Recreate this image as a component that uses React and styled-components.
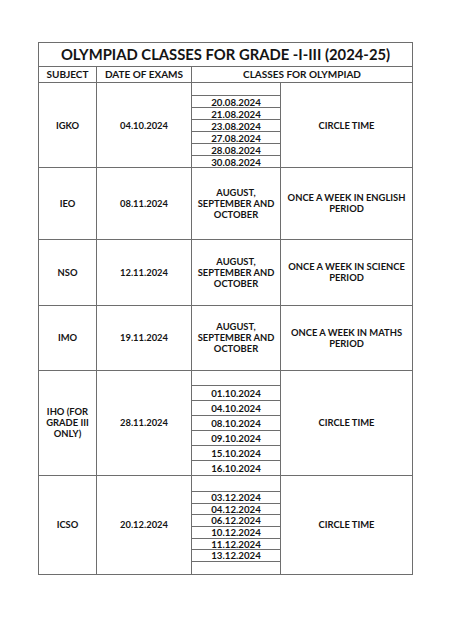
import React from 'react'
import styled, { createGlobalStyle } from 'styled-components'

const GlobalStyle = createGlobalStyle`
  html, body {
    margin: 0;
    padding: 0;
    background: #fff;
  }
  body {
    font-family: Lato, "Open Sans", sans-serif;
    color: #141414;
  }
`

const Page = styled.div`
  width: 474px;
  height: 632px;
  box-sizing: border-box;
  padding: 42px 0 0 38px;
`

const Table = styled.table`
  border-collapse: collapse;
  table-layout: fixed;
  width: 374px;
  font-weight: 700;
  font-size: 9.4px;
  line-height: 11px;
`

const Row = styled.tr`
  height: ${p => p.$h}px;
`

const Cell = styled.td`
  border: 1px solid #6e6e6e;
  padding: 0 2px;
  text-align: center;
  vertical-align: middle;
`

const TitleCell = styled(Cell)`
  font-size: 14.8px;
  line-height: 20px;
  padding: 0;
`

const HeadCell = styled(Cell)`
  font-size: 10px;
  padding: 0;
`

const DatesCell = styled(Cell)`
  padding: 0;
  vertical-align: top;
  font-size: 9.7px;
`

const DateStack = styled.div`
  display: flex;
  flex-direction: column;
  padding-top: ${p => p.$gap}px;
`

const DateBox = styled.div`
  height: ${p => p.$h}px;
  line-height: ${p => p.$h}px;
  border-top: 1px solid #6e6e6e;
  box-sizing: border-box;
`

const rows = [
  {
    subject: 'IGKO', exam: '04.10.2024', h: 83.5, plan: 'CIRCLE TIME',
    dates: { gap: 12, box: 12, tail: 0, list: ['20.08.2024', '21.08.2024', '23.08.2024', '27.08.2024', '28.08.2024', '30.08.2024'] },
  },
  { subject: 'IEO', exam: '08.11.2024', h: 71.5, months: true, plan: 'ONCE A WEEK IN ENGLISH PERIOD' },
  { subject: 'NSO', exam: '12.11.2024', h: 66.5, months: true, plan: 'ONCE A WEEK IN SCIENCE PERIOD' },
  { subject: 'IMO', exam: '19.11.2024', h: 64.5, months: true, plan: 'ONCE A WEEK IN MATHS PERIOD' },
  {
    subject: 'IHO (FOR GRADE III ONLY)', exam: '28.11.2024', h: 103.5, plan: 'CIRCLE TIME',
    dates: { gap: 14, box: 15, tail: 0, list: ['01.10.2024', '04.10.2024', '08.10.2024', '09.10.2024', '15.10.2024', '16.10.2024'] },
  },
  {
    subject: 'ICSO', exam: '20.12.2024', h: 98.5, plan: 'CIRCLE TIME',
    dates: { gap: 15.5, box: 11.7, tail: 12.5, list: ['03.12.2024', '04.12.2024', '06.12.2024', '10.12.2024', '11.12.2024', '13.12.2024'] },
  },
]

const Months = () => (
  <>
    AUGUST,<br />SEPTEMBER AND<br />OCTOBER
  </>
)

export default function App() {
  return (
    <Page>
      <GlobalStyle />
      <Table>
        <colgroup>
          <col style={{ width: 58 }} />
          <col style={{ width: 95 }} />
          <col style={{ width: 89 }} />
          <col style={{ width: 132 }} />
        </colgroup>
        <tbody>
          <Row $h={23.5}>
            <TitleCell colSpan={4}>OLYMPIAD CLASSES FOR GRADE -I-III (2024-25)</TitleCell>
          </Row>
          <Row $h={16.5}>
            <HeadCell>SUBJECT</HeadCell>
            <HeadCell>DATE OF EXAMS</HeadCell>
            <HeadCell colSpan={2}>CLASSES FOR OLYMPIAD</HeadCell>
          </Row>
          {rows.map(r => (
            <Row key={r.subject} $h={r.h}>
              <Cell>{r.subject}</Cell>
              <Cell>{r.exam}</Cell>
              {r.dates ? (
                <DatesCell>
                  <DateStack $gap={r.dates.gap}>
                    {r.dates.list.map(d => (
                      <DateBox key={d} $h={r.dates.box}>{d}</DateBox>
                    ))}
                    {r.dates.tail > 0 && <DateBox $h={r.dates.tail} />}
                  </DateStack>
                </DatesCell>
              ) : (
                <Cell><Months /></Cell>
              )}
              <Cell>{r.plan}</Cell>
            </Row>
          ))}
        </tbody>
      </Table>
    </Page>
  )
}
